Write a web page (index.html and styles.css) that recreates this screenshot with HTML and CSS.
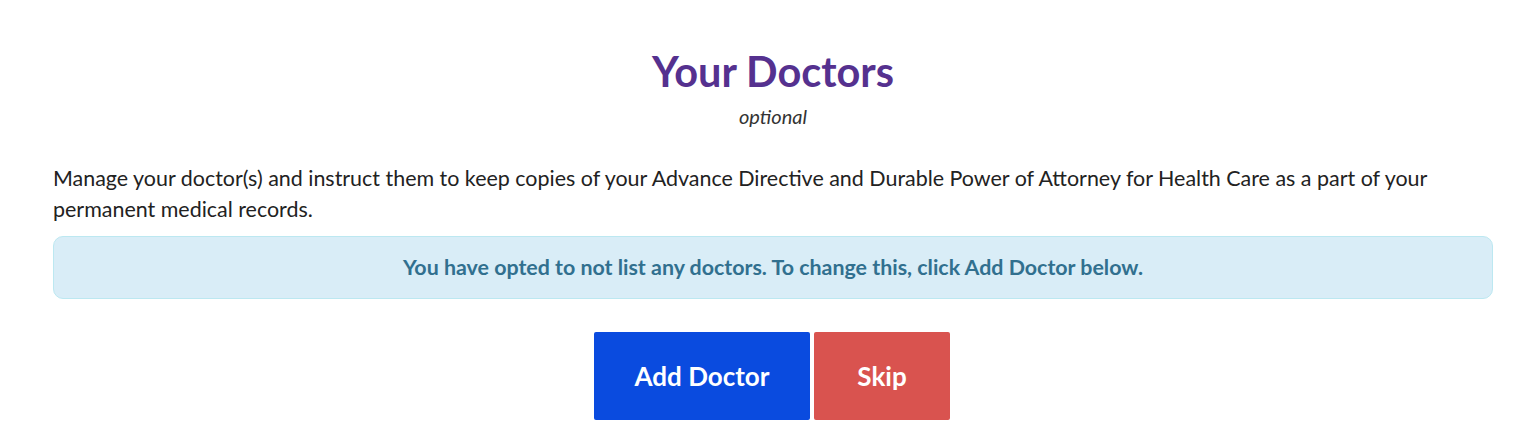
FILE: index.html
```html
<!DOCTYPE html>
<html lang="en">
<head>
    <meta charset="UTF-8">
    <meta name="viewport" content="width=device-width, initial-scale=1.0">
    <title>Your Doctors</title>
    <link rel="stylesheet" href="styles.css">
</head>
<body>

    <div class="container">
        <h1>Your Doctors</h1>
        <p class="optional">optional</p>

        <p class="intro">Manage your doctor(s) and instruct them to keep copies of your Advance Directive and Durable Power of Attorney for Health Care as a part of your permanent medical records.</p>

        <div class="alert">You have opted to not list any doctors. To change this, click Add Doctor below.</div>

        <div class="actions">
            <button class="btn btn-add">Add Doctor</button>
            <button class="btn btn-skip">Skip</button>
        </div>
    </div>

</body>
</html>
```

FILE: styles.css
```css
body {
    margin: 0;
    font-family: Lato, "Open Sans", sans-serif;
    color: #222;
    background: #fff;
}
.container {
    width: 1440px;
    margin: 0 0 0 53px;
    padding-top: 46px;
}
h1 {
    margin: 0;
    text-align: center;
    color: #55318f;
    font-size: 41.5px;
    font-weight: 700;
    line-height: 50px;
}
.optional {
    margin: 8px 0 0;
    text-align: center;
    font-style: italic;
    font-size: 20px;
    color: #333;
}
.intro {
    margin: 35px 0 11px;
    font-size: 21.45px;
    line-height: 31px;
}
.alert {
    height: 61px;
    line-height: 61px;
    background-color: #d9edf7;
    border: 1px solid #bce8f1;
    border-radius: 10px;
    color: #31708f;
    text-align: center;
    font-weight: 700;
    font-size: 21.4px;
}
.actions {
    display: flex;
    justify-content: center;
    gap: 4px;
    margin-top: 33px;
    padding-right: 2px;
}
.btn {
    height: 88px;
    border: none;
    border-radius: 2px;
    color: #fff;
    font-family: inherit;
    font-weight: 700;
    font-size: 26px;
    cursor: pointer;
}
.btn-add {
    width: 216px;
    background-color: #0a4bdf;
}
.btn-skip {
    width: 136px;
    background-color: #d9534f;
}
```
